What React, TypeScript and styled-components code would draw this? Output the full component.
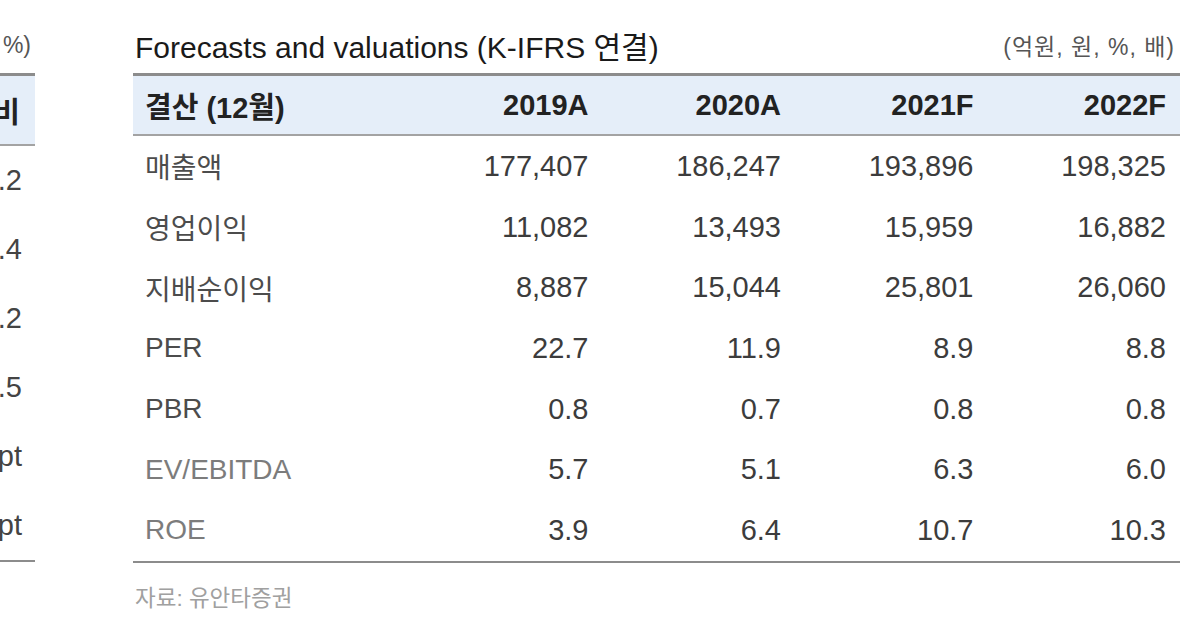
import React from "react";
import styled, { createGlobalStyle } from "styled-components";

const GlobalStyle = createGlobalStyle`
  html, body { margin: 0; padding: 0; background: #ffffff; }
  body {
    font-family: "Liberation Sans", Arial, "Noto Sans CJK KR", sans-serif;
    color: #333;
  }
`;

const HEAD_BG = "#e5eef9";

const Page = styled.div`
  width: 1200px;
  height: 630px;
  display: flex;
  gap: 98px;
  overflow: hidden;
  background: #fff;
`;

/* ---------- left, cut-off panel ---------- */
const LeftPanel = styled.div`
  width: 35px;
  flex-shrink: 0;
  display: flex;
  flex-direction: column;
`;

const LeftCaption = styled.div`
  height: 73px;
  box-sizing: border-box;
  padding-top: 17px;
  padding-right: 4px;
  display: flex;
  justify-content: flex-end;
  align-items: center;
  white-space: nowrap;
  font-size: 23px;
  color: #555;
`;

const LeftTable = styled.div`
  border-top: 3px solid #8c8c8c;
  border-bottom: 2px solid #8c8c8c;
  display: flex;
  flex-direction: column;
`;

const LeftCell = styled.div<{ $head?: boolean }>`
  height: ${(p) => (p.$head ? "70px" : "69px")};
  box-sizing: border-box;
  display: flex;
  justify-content: flex-end;
  align-items: center;
  padding-right: ${(p) => (p.$head ? "15px" : "13px")};
  white-space: nowrap;
  font-size: 29px;
  font-weight: ${(p) => (p.$head ? 700 : 400)};
  color: ${(p) => (p.$head ? "#222" : "#444")};
  background: ${(p) => (p.$head ? HEAD_BG : "transparent")};
  border-bottom: ${(p) => (p.$head ? "2px solid #a3a3a3" : "none")};
`;

/* ---------- main table ---------- */
const MainPanel = styled.div`
  width: 1047px;
  flex-shrink: 0;
  display: flex;
  flex-direction: column;
`;

const TitleRow = styled.div`
  height: 73px;
  box-sizing: border-box;
  padding: 17px 5px 0 2px;
  display: flex;
  justify-content: space-between;
  align-items: center;
`;

const Title = styled.div`
  font-size: 30px;
  color: #1a1a1a;
  white-space: nowrap;
`;

const Unit = styled.div`
  font-size: 23px;
  letter-spacing: 1px;
  color: #555;
  white-space: nowrap;
`;

const Table = styled.div`
  display: grid;
  grid-template-columns: 277px repeat(4, 1fr);
  border-top: 3px solid #8c8c8c;
  border-bottom: 2px solid #8c8c8c;
`;

const HeadCell = styled.div<{ $label?: boolean }>`
  height: 58px;
  display: flex;
  align-items: center;
  justify-content: ${(p) => (p.$label ? "flex-start" : "flex-end")};
  padding: ${(p) => (p.$label ? "0 0 0 12px" : "0 14px 0 0")};
  background: ${HEAD_BG};
  border-bottom: 2px solid #a3a3a3;
  font-size: 29px;
  font-weight: 700;
  color: #222;
  white-space: nowrap;
`;

const LabelCell = styled.div<{ $muted?: boolean }>`
  height: 60.7px;
  display: flex;
  align-items: center;
  padding-left: 12px;
  font-size: 28px;
  color: ${(p) => (p.$muted ? "#7c7c7c" : "#4c4c4c")};
  white-space: nowrap;
`;

const ValueCell = styled.div`
  height: 60.7px;
  display: flex;
  align-items: center;
  justify-content: flex-end;
  padding-right: 14px;
  font-size: 29px;
  color: #3c3c3c;
  white-space: nowrap;
`;

const Source = styled.div`
  padding: 17px 0 0 2px;
  font-size: 22.5px;
  color: #a0a0a0;
  white-space: nowrap;
`;

const years = ["2019A", "2020A", "2021F", "2022F"];

const rows: { label: string; values: string[]; muted?: boolean }[] = [
  { label: "매출액", values: ["177,407", "186,247", "193,896", "198,325"] },
  { label: "영업이익", values: ["11,082", "13,493", "15,959", "16,882"] },
  { label: "지배순이익", values: ["8,887", "15,044", "25,801", "26,060"] },
  { label: "PER", values: ["22.7", "11.9", "8.9", "8.8"] },
  { label: "PBR", values: ["0.8", "0.7", "0.8", "0.8"] },
  { label: "EV/EBITDA", values: ["5.7", "5.1", "6.3", "6.0"], muted: true },
  { label: "ROE", values: ["3.9", "6.4", "10.7", "10.3"], muted: true },
];

const leftRows = [".2", ".4", ".2", ".5", "pt", "pt"];

export default function App() {
  return (
    <>
      <GlobalStyle />
      <Page>
        <LeftPanel>
          <LeftCaption>%)</LeftCaption>
          <LeftTable>
            <LeftCell $head>비</LeftCell>
            {leftRows.map((v, i) => (
              <LeftCell key={i}>{v}</LeftCell>
            ))}
          </LeftTable>
        </LeftPanel>

        <MainPanel>
          <TitleRow>
            <Title>Forecasts and valuations (K-IFRS 연결)</Title>
            <Unit>(억원, 원, %, 배)</Unit>
          </TitleRow>
          <Table>
            <HeadCell $label>결산 (12월)</HeadCell>
            {years.map((y) => (
              <HeadCell key={y}>{y}</HeadCell>
            ))}
            {rows.map((r) => (
              <React.Fragment key={r.label}>
                <LabelCell $muted={r.muted}>{r.label}</LabelCell>
                {r.values.map((v, i) => (
                  <ValueCell key={i}>{v}</ValueCell>
                ))}
              </React.Fragment>
            ))}
          </Table>
          <Source>자료: 유안타증권</Source>
        </MainPanel>
      </Page>
    </>
  );
}
